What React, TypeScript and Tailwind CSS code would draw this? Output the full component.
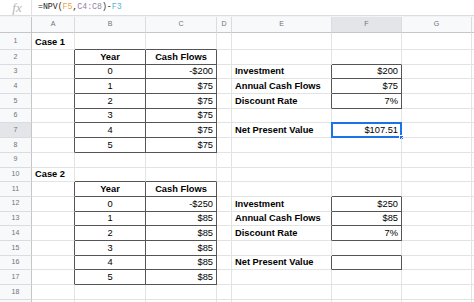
import React from "react";

type Cell = { t: string; b?: boolean; a?: "l" | "c" | "r" };

const COLS = ["A", "B", "C", "D", "E", "F", "G", "H"];
const ROWS = Array.from({ length: 19 }, (_, i) => i + 1);

const data: Record<string, Cell> = {
  A1: { t: "Case 1", b: true },
  B2: { t: "Year", b: true, a: "c" },
  C2: { t: "Cash Flows", b: true, a: "c" },
  B3: { t: "0", a: "c" },
  C3: { t: "-$200", a: "r" },
  B4: { t: "1", a: "c" },
  C4: { t: "$75", a: "r" },
  B5: { t: "2", a: "c" },
  C5: { t: "$75", a: "r" },
  B6: { t: "3", a: "c" },
  C6: { t: "$75", a: "r" },
  B7: { t: "4", a: "c" },
  C7: { t: "$75", a: "r" },
  B8: { t: "5", a: "c" },
  C8: { t: "$75", a: "r" },
  E3: { t: "Investment", b: true },
  F3: { t: "$200", a: "r" },
  E4: { t: "Annual Cash Flows", b: true },
  F4: { t: "$75", a: "r" },
  E5: { t: "Discount Rate", b: true },
  F5: { t: "7%", a: "r" },
  E7: { t: "Net Present Value", b: true },
  F7: { t: "$107.51", a: "r" },
  A10: { t: "Case 2", b: true },
  B11: { t: "Year", b: true, a: "c" },
  C11: { t: "Cash Flows", b: true, a: "c" },
  B12: { t: "0", a: "c" },
  C12: { t: "-$250", a: "r" },
  B13: { t: "1", a: "c" },
  C13: { t: "$85", a: "r" },
  B14: { t: "2", a: "c" },
  C14: { t: "$85", a: "r" },
  B15: { t: "3", a: "c" },
  C15: { t: "$85", a: "r" },
  B16: { t: "4", a: "c" },
  C16: { t: "$85", a: "r" },
  B17: { t: "5", a: "c" },
  C17: { t: "$85", a: "r" },
  E12: { t: "Investment", b: true },
  F12: { t: "$250", a: "r" },
  E13: { t: "Annual Cash Flows", b: true },
  F13: { t: "$85", a: "r" },
  E14: { t: "Discount Rate", b: true },
  F14: { t: "7%", a: "r" },
  E16: { t: "Net Present Value", b: true },
};

// boxes: [colStart, colEnd, rowStart, rowEnd] (col index 0 = A)
const boxes: [number, number, number, number][] = [
  [1, 2, 2, 8],
  [5, 5, 3, 5],
  [5, 5, 7, 7],
  [1, 2, 11, 17],
  [5, 5, 12, 14],
  [5, 5, 16, 16],
];

const inBox = (r: number, c: number) =>
  boxes.some(([c0, c1, r0, r1]) => c >= c0 && c <= c1 && r >= r0 && r <= r1);

export default function App() {
  return (
    <div
      className="w-[474px] h-[302px] overflow-hidden bg-white text-[#000]"
      style={{ fontFamily: "'Liberation Sans', Arial, sans-serif" }}
    >
      {/* formula bar */}
      <div className="flex h-[16px] border-b border-[#dadce0] bg-white">
        <div className="flex w-[32px] items-center justify-center border-r border-[#e3e3e3]">
          <span
            className="pl-[3px] text-[13px] italic leading-none text-[#b4b4b4]"
            style={{ fontFamily: "'Liberation Serif', serif" }}
          >
            fx
          </span>
        </div>
        <div
          className="flex items-center pl-[6px] text-[8.2px] leading-none text-[#222]"
          style={{ fontFamily: "'Liberation Mono', monospace" }}
        >
          <span>=NPV(</span>
          <span className="text-[#f0a03a]">F5</span>
          <span>,</span>
          <span className="text-[#8f7fa6]">C4:C8</span>
          <span>)-</span>
          <span className="text-[#4fb6d2]">F3</span>
        </div>
      </div>
      <div className="h-[1px] bg-[#f1f3f4]" />

      {/* grid */}
      <div className="grid grid-cols-[32px_43px_71px_71px_15px_100px_70px_70px_1fr] grid-rows-[16px_17px_repeat(18,14.7px)]">
        {/* corner */}
        <div className="border-b border-r border-[#c4c7c5] bg-[#f8f9fa]" />
        {COLS.map((c) => (
          <div
            key={c}
            className={
              "flex items-center justify-center border-b border-r border-b-[#c4c7c5] border-r-[#dadce0] text-[7px] text-[#6f7378] " +
              (c === "F" ? "bg-[#e3e5e8]" : "bg-[#f8f9fa]")
            }
          >
            {c === "H" ? "" : c}
          </div>
        ))}
        {ROWS.map((r) => (
          <React.Fragment key={r}>
            <div
              className={
                "flex items-center justify-center border-b border-r border-b-[#dadce0] border-r-[#c4c7c5] text-[7px] text-[#6f7378] " +
                (r === 7 ? "bg-[#e3e5e8]" : "bg-[#f8f9fa]")
              }
            >
              {r < 19 ? r : ""}
            </div>
            {COLS.map((c, ci) => {
              const cell = data[c + r];
              const darkR = inBox(r, ci) || inBox(r, ci + 1);
              const darkB = inBox(r, ci) || inBox(r + 1, ci);
              const sel = c === "F" && r === 7;
              return (
                <div
                  key={c}
                  className={
                    "relative flex items-end whitespace-nowrap border-b border-r px-[3px] pb-[1px] text-[9.3px] leading-[11px] " +
                    (darkR ? "border-r-[#555555] " : "border-r-[#e2e3e3] ") +
                    (darkB ? "border-b-[#555555] " : "border-b-[#e2e3e3] ") +
                    (cell?.a === "c"
                      ? "justify-center "
                      : cell?.a === "r"
                      ? "justify-end "
                      : "justify-start ") +
                    (cell?.b ? "font-bold" : "font-normal")
                  }
                >
                  {cell?.t}
                  {sel && (
                    <>
                      <div className="pointer-events-none absolute -left-[1px] -top-[1px] bottom-[-1px] right-[-1px] border-2 border-[#1a73e8]" />
                      <div className="absolute -bottom-[3px] -right-[3px] h-[5px] w-[5px] border border-white bg-[#1a73e8]" />
                    </>
                  )}
                </div>
              );
            })}
          </React.Fragment>
        ))}
      </div>
    </div>
  );
}
